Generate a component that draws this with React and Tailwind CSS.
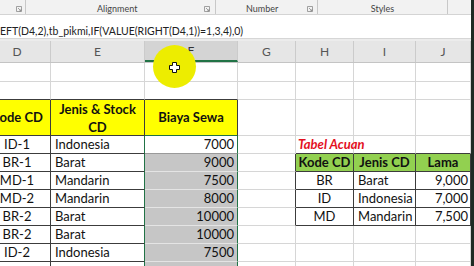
import React from 'react';

const W = ['w-[67px]', 'w-[94px]', 'w-[93px]', 'w-[58px]', 'w-[58px]', 'w-[62px]', 'w-[55px]'];

const GR = 'border-r-[#d6d6d6]';
const GB = 'border-b-[#d6d6d6]';
const KR = 'border-r-[#3c3c3c]';
const KB = 'border-b-[#3c3c3c]';
const SR = 'border-r-[#217346]';

// one spreadsheet cell
const Cell = ({ i, rc = GR, bc = GB, className = '', children }) => (
  <div className={`${W[i]} shrink-0 border-r border-b ${rc} ${bc} flex items-center text-[13px] text-[#111] ${className}`}>
    {children}
  </div>
);

const left = [
  ['ID-1', 'Indonesia', '7000'],
  ['BR-1', 'Barat', '9000'],
  ['MD-1', 'Mandarin', '7500'],
  ['MD-2', 'Mandarin', '8000'],
  ['BR-2', 'Barat', '10000'],
  ['BR-2', 'Barat', '10000'],
  ['ID-2', 'Indonesia', '7500'],
  ['', '', ''],
];

const acuan = [
  ['BR', 'Barat', '9,000'],
  ['ID', 'Indonesia', '7,000'],
  ['MD', 'Mandarin', '7,500'],
];

const Launcher = () => (
  <svg width="6" height="6" viewBox="0 0 6 6" className="shrink-0">
    <path d="M0.5 0.5h5v5h-5z" fill="none" stroke="#8a8a8a" strokeWidth="0.8" />
    <path d="M2 2l3 3M3 5h2V3" fill="none" stroke="#8a8a8a" strokeWidth="0.8" />
  </svg>
);

const App = () => {
  return (
    <div className="relative w-[474px] h-[266px] overflow-hidden flex bg-white font-['Lato',sans-serif]">
      <div className="w-[471px] flex flex-col overflow-hidden">
        {/* ribbon group labels */}
        <div className="h-[15px] shrink-0 bg-[#f2f2f2] border-b border-[#d4d4d4] flex items-end text-[9px] leading-[12px] text-[#444]">
          <div className="w-[26px] h-full flex items-center justify-end pr-[3px] pt-[3px] border-r border-[#c8c8c8]">
            <Launcher />
          </div>
          <div className="w-[190px] h-full flex items-center pt-[3px] border-r border-[#c8c8c8]">
            <span className="ml-[71px]">Alignment</span>
            <span className="ml-auto mr-[5px]"><Launcher /></span>
          </div>
          <div className="w-[102px] h-full flex items-center pt-[3px] border-r border-[#c8c8c8]">
            <span className="ml-[30px]">Number</span>
            <span className="ml-auto mr-[4px]"><Launcher /></span>
          </div>
          <div className="w-[130px] h-full flex items-center justify-center pt-[3px] border-r border-[#c8c8c8]">
            Styles
          </div>
        </div>

        {/* formula bar */}
        <div className="h-[23px] shrink-0 bg-white pt-[10px] text-[10.5px] leading-[12px] text-[#222] whitespace-nowrap">
          EFT(D4,2),tb_pikmi,IF(VALUE(RIGHT(D4,1))=1,3,4),0)
        </div>
        <div className="h-[3px] shrink-0 bg-[#ececec] border-t border-[#d6d6d6]" />

        <div className="-ml-[16px] flex flex-col">
          {/* column headers */}
          <div className="h-[22px] flex bg-[#e6e6e6] border-b border-[#c4c4c4] text-[12px] text-[#555]">
            {['D', 'E', 'F', 'G', 'H', 'I', 'J'].map((c, i) => (
              <div
                key={c}
                className={`${W[i]} shrink-0 flex items-center justify-center border-r border-[#cbcbcb] ${
                  c === 'F' ? 'bg-[#d4d4d4] border-b-2 border-b-[#217346] text-[#333]' : ''
                }`}
              >
                {c}
              </div>
            ))}
          </div>

          {/* blank rows */}
          <div className="h-[19px] flex">
            {W.map((_, i) => <Cell key={i} i={i} />)}
          </div>
          <div className="h-[18px] flex">
            {W.map((_, i) => <Cell key={i} i={i} bc={i < 3 ? KB : GB} />)}
          </div>

          {/* yellow header */}
          <div className="h-[36px] flex">
            <Cell i={0} rc={KR} bc={KB} className="bg-[#ffff00] font-bold justify-center">Kode CD</Cell>
            <Cell i={1} rc={KR} bc={KB} className="bg-[#ffff00] font-bold justify-center text-center leading-[18px]">
              Jenis &amp; Stock<br />CD
            </Cell>
            <Cell i={2} rc={KR} bc="border-b-[#217346]" className="bg-[#ffff00] font-bold justify-center">Biaya Sewa</Cell>
            {[3, 4, 5, 6].map((i) => <Cell key={i} i={i} />)}
          </div>

          {/* data rows */}
          {left.map((row, r) => {
            const a = r >= 2 ? acuan[r - 2] : null;
            return (
              <div key={r} className="h-[18px] flex shrink-0">
                <Cell i={0} rc={KR} bc={KB} className="justify-center">{row[0]}</Cell>
                <Cell i={1} rc={SR} bc={KB} className="pl-[4px]">{row[1]}</Cell>
                <Cell
                  i={2}
                  rc={SR}
                  bc={r === 0 ? 'border-b-[#9a9a9a]' : 'border-b-[#e4e4e4]'}
                  className={`justify-end pr-[3px] ${r === 0 ? 'bg-white' : 'bg-[#c6c6c6]'}`}
                >
                  {row[2]}
                </Cell>
                <Cell i={3} rc={r >= 1 && r <= 4 ? KR : GR} />
                {r === 0 && (
                  <>
                    <Cell i={4} bc={KB} className="pl-[2px] overflow-visible whitespace-nowrap">
                      <span className="font-bold italic text-[#e3101e] relative z-10">Tabel Acuan</span>
                    </Cell>
                    <Cell i={5} bc={KB} />
                    <Cell i={6} bc={KB} />
                  </>
                )}
                {r === 1 && (
                  <>
                    <Cell i={4} rc={KR} bc={KB} className="bg-[#92d050] font-bold justify-center">Kode CD</Cell>
                    <Cell i={5} rc={KR} bc={KB} className="bg-[#92d050] font-bold justify-center">Jenis CD</Cell>
                    <Cell i={6} rc={KR} bc={KB} className="bg-[#92d050] font-bold justify-center">Lama</Cell>
                  </>
                )}
                {a && (
                  <>
                    <Cell i={4} rc={KR} bc={KB} className="justify-center">{a[0]}</Cell>
                    <Cell i={5} rc={KR} bc={KB} className="pl-[4px]">{a[1]}</Cell>
                    <Cell i={6} rc={KR} bc={KB} className="justify-end pr-[2px]">{a[2]}</Cell>
                  </>
                )}
                {r > 4 && [4, 5, 6].map((i) => <Cell key={i} i={i} />)}
              </div>
            );
          })}
        </div>
      </div>
      <div className="w-[3px] shrink-0 bg-[#1f2b24]" />

      {/* cursor highlight */}
      <div className="absolute left-[153px] top-[45px] w-[43px] h-[43px] rounded-full bg-[#eded00]" />
      <svg className="absolute left-[169px] top-[62px]" width="11" height="11" viewBox="0 0 11 11">
        <path
          d="M3.5 0.5h4v3h3v4h-3v3h-4v-3h-3v-4h3z"
          fill="#fff"
          stroke="#111"
          strokeWidth="1"
        />
      </svg>
    </div>
  );
};

export default App;
